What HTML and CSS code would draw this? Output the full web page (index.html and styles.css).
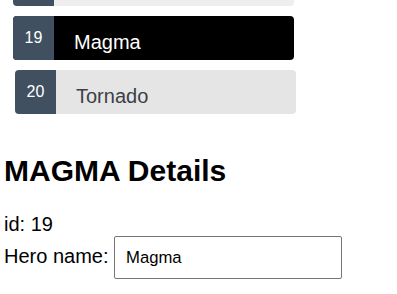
FILE: index.html
```html
<!DOCTYPE html>
<html>
<head>
  <title>Tour of Heroes</title>
  <link rel="stylesheet" href="styles.css">
</head>
<body>
  <ul class="heroes">
    <!-- scrolled mostly out of view -->
    <li class="offscreen">
      <span class="badge"></span>
      <span class="name"></span>
    </li>
    <li class="selected">
      <span class="badge">19</span>
      <span class="name">Magma</span>
    </li>
    <li class="hovered">
      <span class="badge">20</span>
      <span class="name">Tornado</span>
    </li>
  </ul>

  <div class="details">
    <h2>MAGMA Details</h2>
    <div>id: 19</div>
    <div>
      <label for="hero-name">Hero name: </label>
      <input id="hero-name" value="Magma" placeholder="name">
    </div>
  </div>
</body>
</html>
```

FILE: styles.css
```css
body {
  margin: 0 4px;
  font-family: "Liberation Sans", Arial, sans-serif;
  font-size: 20px;
  color: #000;
}

h2 {
  font-size: 30px;
  margin: 25px 0;
}

/* hero list */
.heroes {
  list-style-type: none;
  padding: 0;
  margin: -48px 0 40px 0;
}

.heroes li {
  display: flex;
  width: 281px;
  height: 44px;
  margin: 10px 10px 10px 9px;
  background-color: #eee;
  color: #333;
  border-radius: 4px;
  cursor: pointer;
}

.heroes li.hovered {
  margin-left: 11px;
  background-color: #e5e5e5;
  color: #3b4046;
}

.heroes li.selected {
  background-color: #000;
  color: white;
}

.heroes .badge {
  display: flex;
  align-items: center;
  justify-content: center;
  width: 41px;
  font-size: 16px;
  color: white;
  background-color: #405061;
  border-radius: 4px 0 0 4px;
}

.heroes .name {
  padding: 15px 0 0 20px;
  line-height: 23px;
}

/* detail form */
.details input {
  box-sizing: border-box;
  width: 228px;
  height: 43px;
  padding: 0 11px;
  border: 1px solid #767676;
  border-radius: 2px;
  font-family: "Liberation Sans", Arial, sans-serif;
  font-size: 16.67px;
  vertical-align: baseline;
}
```
